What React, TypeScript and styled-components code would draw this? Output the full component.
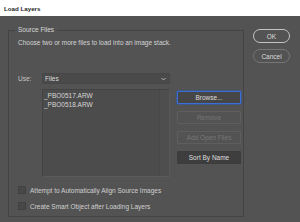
import React from "react";
import styled, { createGlobalStyle } from "styled-components";

const GlobalStyle = createGlobalStyle`
  html, body {
    margin: 0;
    padding: 0;
    background: #535353;
  }
  * {
    box-sizing: border-box;
  }
`;

const Window = styled.div`
  width: 300px;
  height: 222px;
  display: flex;
  flex-direction: column;
  background: #535353;
  font-family: "Liberation Sans", Arial, sans-serif;
  font-size: 6.5px;
  color: #d4d4d4;
  overflow: hidden;
`;

const TitleBar = styled.div`
  height: 16px;
  flex: none;
  display: flex;
  align-items: center;
  padding-left: 4px;
  background: #ffffff;
  color: #262626;
  font-size: 6.2px;
  font-weight: 600;
`;

const Content = styled.div`
  flex: 1;
  display: flex;
  gap: 9px;
  padding: 10px 10px 5px 8px;
`;

const Group = styled.fieldset`
  flex: none;
  width: 236px;
  margin: 0;
  min-width: 0;
  padding: 0 9px 6px 9px;
  border: 1px solid #444444;
  display: flex;
  flex-direction: column;
`;

const Legend = styled.legend`
  padding: 0 3px;
  margin-left: -3px;
  line-height: 8px;
  color: #d8d8d8;
`;

const Hint = styled.div`
  margin-top: 5px;
  line-height: 8px;
`;

const Grid = styled.div`
  margin-top: 26px;
  display: grid;
  grid-template-columns: 24px 121px 64px;
  grid-template-rows: 11px 88px;
  column-gap: 7px;
  row-gap: 5px;
`;

const UseLabel = styled.div`
  grid-column: 1;
  grid-row: 1;
  margin-right: -7px;
  line-height: 11px;
  color: #c8c8c8;
`;

const Select = styled.div`
  grid-column: 2 / span 1;
  grid-row: 1;
  margin-left: -7px;
  display: flex;
  align-items: center;
  justify-content: space-between;
  padding: 0 3px 0 2px;
  background: #4a4a4a;
  border: 1px solid #474747;
  color: #dcdcdc;
`;

const FileList = styled.div`
  grid-column: 2;
  grid-row: 2;
  margin-left: -7px;
  display: flex;
  background: #4c4c4c;
  border: 1px solid #434343;
  border-bottom-color: #5a5a5a;
  border-right-color: #575757;
`;

const Items = styled.div`
  flex: 1;
  padding: 1px 0 0 1px;
`;

const Item = styled.div`
  line-height: 9px;
  color: #d6d6d6;
`;

const ScrollTrack = styled.div`
  width: 10px;
  border-left: 1px solid #484848;
  background: #4e4e4e;
`;

const SideButtons = styled.div`
  grid-column: 3;
  grid-row: 2;
  display: flex;
  flex-direction: column;
  gap: 7px;
  padding-top: 2px;
`;

const SideButton = styled.button<{ $variant?: "focus" | "disabled" | "dark" }>`
  height: 13px;
  padding: 0;
  font: inherit;
  border-radius: 1px;
  cursor: default;
  background: ${(p) =>
    p.$variant === "focus" ? "#464646" : p.$variant === "dark" ? "#3e3e3e" : "#535353"};
  border: 1px solid
    ${(p) =>
      p.$variant === "focus" ? "#3a70d6" : p.$variant === "dark" ? "#3c3c3c" : "#5e5e5e"};
  box-shadow: ${(p) => (p.$variant === "focus" ? "0 0 0 0.5px #2e5cb8" : "none")};
  color: ${(p) => (p.$variant === "disabled" ? "#767676" : "#dedede")};
`;

const Checks = styled.div`
  margin-top: 9px;
  display: flex;
  flex-direction: column;
  gap: 8px;
`;

const CheckRow = styled.label`
  display: flex;
  align-items: center;
  gap: 4px;
  height: 8px;
  color: #d0d0d0;
`;

const Box = styled.span`
  width: 8px;
  height: 8px;
  flex: none;
  border-radius: 1px;
  background: #484848;
  border: 1px solid #404040;
`;

const Actions = styled.div`
  padding-top: 3px;
  display: flex;
  flex-direction: column;
  gap: 6px;
`;

const PillButton = styled.button<{ $primary?: boolean }>`
  width: 37px;
  height: 14px;
  padding: 0;
  font: inherit;
  border-radius: 7px;
  background: transparent;
  border: 1px solid ${(p) => (p.$primary ? "#c4c4c4" : "#767676")};
  color: #dcdcdc;
  cursor: default;
`;

const Chevron = () => (
  <svg width="5" height="4" viewBox="0 0 5 4">
    <polyline points="0.5,1 2.5,3 4.5,1" fill="none" stroke="#bdbdbd" strokeWidth="0.9" />
  </svg>
);

const files = ["_PBO0517.ARW", "_PBO0518.ARW"];

export default function App() {
  return (
    <>
      <GlobalStyle />
      <Window>
        <TitleBar>Load Layers</TitleBar>
        <Content>
          <Group>
            <Legend>Source Files</Legend>
            <Hint>Choose two or more files to load into an image stack.</Hint>
            <Grid>
              <UseLabel>Use:</UseLabel>
              <Select>
                <span>Files</span>
                <Chevron />
              </Select>
              <FileList>
                <Items>
                  {files.map((f) => (
                    <Item key={f}>{f}</Item>
                  ))}
                </Items>
                <ScrollTrack />
              </FileList>
              <SideButtons>
                <SideButton $variant="focus">Browse...</SideButton>
                <SideButton $variant="disabled">Remove</SideButton>
                <SideButton $variant="disabled">Add Open Files</SideButton>
                <SideButton $variant="dark">Sort By Name</SideButton>
              </SideButtons>
            </Grid>
            <Checks>
              <CheckRow>
                <Box />
                Attempt to Automatically Align Source Images
              </CheckRow>
              <CheckRow>
                <Box />
                Create Smart Object after Loading Layers
              </CheckRow>
            </Checks>
          </Group>
          <Actions>
            <PillButton $primary>OK</PillButton>
            <PillButton>Cancel</PillButton>
          </Actions>
        </Content>
      </Window>
    </>
  );
}
